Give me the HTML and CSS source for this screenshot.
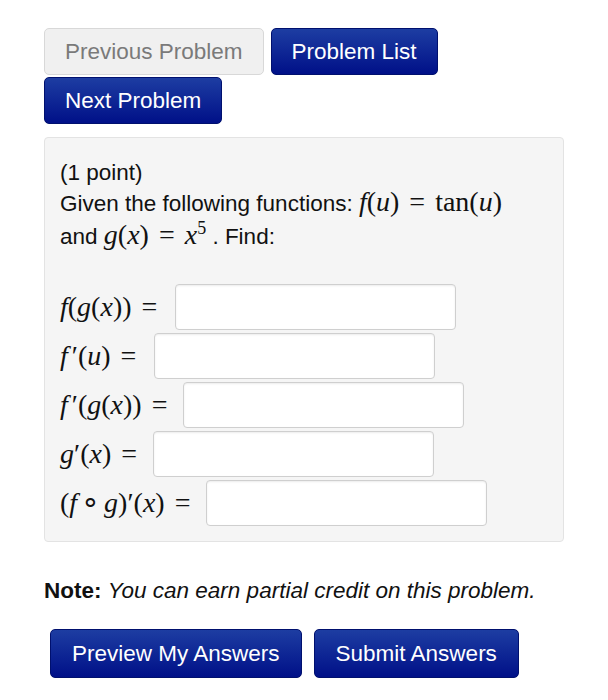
FILE: index.html
```html
<!DOCTYPE html>
<html lang="en">

<head>
  <meta charset="UTF-8">
  <meta name="viewport" content="width=device-width, initial-scale=1.0">
  <title>Problem</title>
  <link rel="stylesheet" href="styles.css">
</head>

<body>
  <div class="page">
    <!-- 上面的导航按钮 -->
    <div class="nav">
      <a class="btn btn-off">Previous Problem</a>
      <a class="btn">Problem List</a>
      <a class="btn">Next Problem</a>
    </div>

    <div class="problem">
      <p class="txt">(1 point)</p>
      <p class="txt">Given the following functions: <span class="math"><i>f</i>(<i>u</i>)<b class="eq">=</b>tan(<i>u</i>)</span></p>
      <p class="txt txt-sup">and <span class="math"><i>g</i>(<i>x</i>)<b class="eq">=</b><i>x</i><sup>5</sup></span> . Find:</p>

      <div class="answers">
        <div class="row">
          <span class="math"><i>f</i>(<i>g</i>(<i>x</i>))<b class="eq eq-wide">=</b></span>
          <input type="text" class="ans">
        </div>
        <div class="row">
          <span class="math"><i>f</i><span class="pr">&#8242;</span>(<i>u</i>)<b class="eq eq-wide">=</b></span>
          <input type="text" class="ans">
        </div>
        <div class="row">
          <span class="math"><i>f</i><span class="pr">&#8242;</span>(<i>g</i>(<i>x</i>))<b class="eq">=</b></span>
          <input type="text" class="ans">
        </div>
        <div class="row">
          <span class="math"><i>g</i>&#8242;(<i>x</i>)<b class="eq">=</b></span>
          <input type="text" class="ans">
        </div>
        <div class="row">
          <span class="math">(<i>f</i><b class="op">&#8728;</b><i>g</i>)&#8242;(<i>x</i>)<b class="eq">=</b></span>
          <input type="text" class="ans">
        </div>
      </div>
    </div>

    <p class="note"><b>Note:</b> <i>You can earn partial credit on this problem.</i></p>

    <div class="submit">
      <a class="btn btn-big">Preview My Answers</a>
      <a class="btn btn-big">Submit Answers</a>
    </div>
  </div>
</body>

</html>
```

FILE: styles.css
```css
body {
  margin: 0;
  font-family: "Liberation Sans", Arial, sans-serif;
  color: #111;
  background: #fff;
}

.page {
  padding: 28px 0 0 44px;
  width: 520px;
}

.nav {
  display: flex;
  flex-wrap: wrap;
  column-gap: 7px;
  row-gap: 2px;
  width: 420px;
}

.btn {
  display: inline-block;
  box-sizing: border-box;
  height: 47px;
  line-height: 45px;
  padding: 0 20px;
  font-size: 22.5px;
  color: #fff;
  border: 1px solid #00106e;
  border-radius: 5px;
  background: linear-gradient(#1d3da2, #001088);
}

.btn-off {
  color: #7a7a7a;
  background: #f0f0f0;
  border-color: #d8d8d8;
}

.problem {
  margin-top: 13px;
  box-sizing: border-box;
  width: 520px;
  padding: 20px 15px 15px 15px;
  background: #f5f5f5;
  border: 1px solid #e3e3e3;
  border-radius: 4px;
}

.txt {
  margin: 0;
  font-size: 22.5px;
  line-height: 29px;
}

.txt-sup {
  margin-top: 2px;
}

.math {
  font-family: "Liberation Serif", "Times New Roman", serif;
  font-size: 28px;
}

.math b {
  font-weight: normal;
}

.math sup {
  font-size: 18px;
  line-height: 0;
}

.pr {
  margin-left: 4px;
}

.eq {
  margin: 0 10px;
}

.eq-wide {
  margin-right: 12px;
}

.op {
  font-size: 30px;
  line-height: 0;
  margin: 0 4px;
}

.answers {
  margin-top: 33px;
  display: flex;
  flex-direction: column;
  gap: 3px;
}

.row {
  display: flex;
  align-items: center;
}

.ans {
  box-sizing: border-box;
  width: 281px;
  height: 46px;
  margin-left: 6px;
  border: 1px solid #cfcfcf;
  border-radius: 4px;
  background: #fff;
  box-shadow: inset 0 1px 2px rgba(0, 0, 0, 0.08);
}

.note {
  margin: 36px 0 0 0;
  font-size: 22.5px;
}

.submit {
  margin-top: 25px;
  padding-left: 6px;
  display: flex;
  gap: 12px;
}

.btn-big {
  height: 49px;
  line-height: 47px;
  padding: 0 21px;
}
```
